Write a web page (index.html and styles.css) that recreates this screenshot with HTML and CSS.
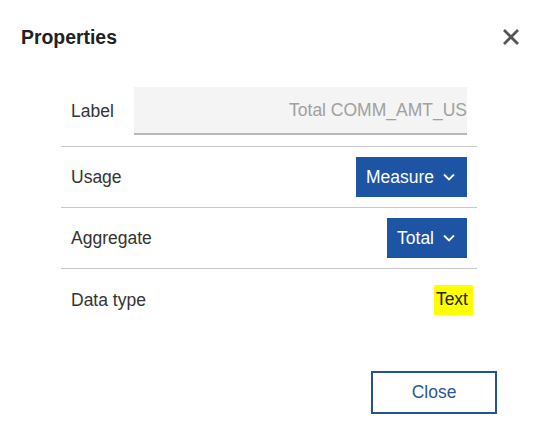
FILE: index.html
```html
<!DOCTYPE html>
<html lang="en">
<head>
<meta charset="UTF-8">
<meta name="viewport" content="width=device-width, initial-scale=1.0">
<title>Properties</title>

<link rel="stylesheet" href="styles.css">

</head>
<body>
    <div class="dialog">
        <div class="dialog-header">
            <h1>Properties</h1>
            <button class="close-x" aria-label="Close">
                <svg width="18" height="18" viewBox="0 0 18 18">
                    <path d="M2 2 L16 16 M16 2 L2 16" stroke="#555" stroke-width="2.8" fill="none"/>
                </svg>
            </button>
        </div>

        <div class="props">
            <div class="prop-row label-row">
                <span class="prop-name">Label</span>
                <input type="text" class="label-input" value="Total COMM_AMT_US">
            </div>
            <div class="prop-row">
                <span class="prop-name">Usage</span>
                <button class="select-button">Measure
                    <svg width="14" height="10" viewBox="0 0 14 10">
                        <path d="M2 2.5 L7 7.5 L12 2.5" stroke="#fff" stroke-width="1.8" fill="none"/>
                    </svg>
                </button>
            </div>
            <div class="prop-row">
                <span class="prop-name">Aggregate</span>
                <button class="select-button">Total
                    <svg width="14" height="10" viewBox="0 0 14 10">
                        <path d="M2 2.5 L7 7.5 L12 2.5" stroke="#fff" stroke-width="1.8" fill="none"/>
                    </svg>
                </button>
            </div>
            <div class="prop-row last">
                <span class="prop-name">Data type</span>
                <span class="data-type">Text</span>
            </div>
        </div>

        <div class="dialog-footer">
            <button class="close-button">Close</button>
        </div>
    </div>
</body>
</html>
```

FILE: styles.css
```css
body {
    margin: 0;
    font-family: "Liberation Sans", Arial, sans-serif;
    background-color: #fff;
    color: #333;
}

.dialog {
    width: 544px;
    height: 432px;
    box-sizing: border-box;
}

.dialog-header {
    display: flex;
    justify-content: space-between;
    align-items: center;
    padding: 24px 24px 0 21px;
    height: 26px;
}

h1 {
    margin: 0;
    font-size: 19.4px;
    font-weight: bold;
    color: #222;
}

.close-x {
    border: none;
    background: none;
    padding: 0;
    margin-top: 2px;
    cursor: pointer;
}

.props {
    margin: 37px 67px 0 61px;
}

.prop-row {
    display: flex;
    justify-content: space-between;
    align-items: center;
    padding: 10px 10px;
    border-bottom: 1px solid #c8c8c8;
    font-size: 17.5px;
}

.prop-row.label-row {
    padding-top: 0;
    padding-bottom: 11px;
}

.prop-row.last {
    border-bottom: none;
    height: 40px;
    padding-top: 11px;
}

.prop-name {
    color: #333;
}

.label-input {
    width: 333px;
    height: 48px;
    box-sizing: border-box;
    border: none;
    border-bottom: 2px solid #b9b9b9;
    background-color: #f4f4f4;
    text-align: right;
    font-family: inherit;
    font-size: 17.5px;
    color: #a0a0a0;
    padding: 0 0 0 10px;
    outline: none;
}

.select-button {
    display: flex;
    align-items: center;
    gap: 8px;
    height: 40px;
    padding: 0 11px 0 10px;
    border: none;
    background-color: #1d55a4;
    color: #fff;
    font-family: inherit;
    font-size: 17.5px;
    cursor: pointer;
}

.data-type {
    background-color: #ffff00;
    color: #222;
    padding: 4px 5px 5px 2px;
    margin-right: -6px;
}

.dialog-footer {
    display: flex;
    justify-content: flex-end;
    padding: 41px 47px 0 0;
}

.close-button {
    width: 126px;
    height: 43px;
    border: 2px solid #24538f;
    background-color: #fff;
    color: #2d5697;
    font-family: inherit;
    font-size: 17.5px;
    cursor: pointer;
}
```
